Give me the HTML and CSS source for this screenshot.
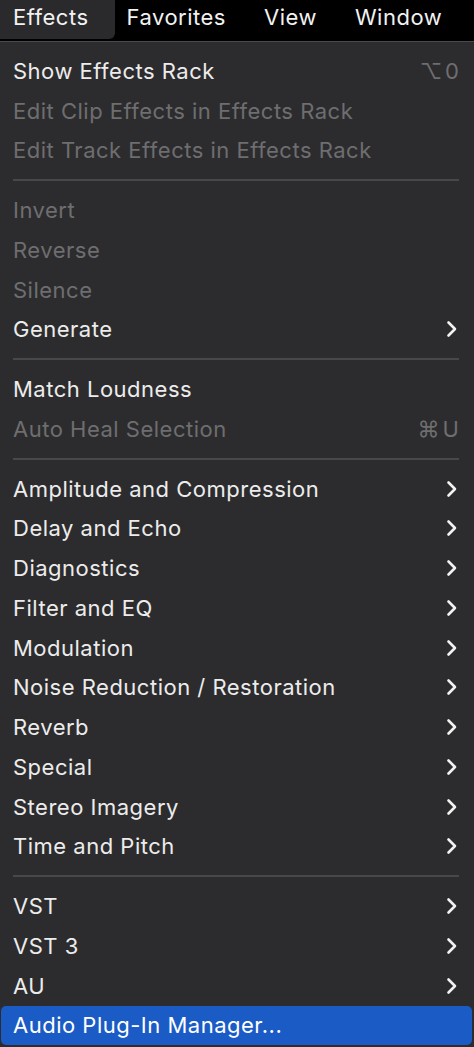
FILE: index.html
```html
<!DOCTYPE html>
<html lang="en">
<head>
<meta charset="utf-8">
<title>Effects menu</title>
<link rel="stylesheet" href="styles.css">
</head>
<body>
<div class="menubar">
  <div class="mb-item active">Effects</div>
  <div class="mb-item">Favorites</div>
  <div class="mb-item">View</div>
  <div class="mb-item">Window</div>
</div>
<div class="menu">
  <div class="row"><span class="label">Show Effects Rack</span><span class="key">⌥0</span></div>
  <div class="row dis"><span class="label">Edit Clip Effects in Effects Rack</span></div>
  <div class="row dis"><span class="label">Edit Track Effects in Effects Rack</span></div>
  <div class="sep"></div>
  <div class="row dis"><span class="label">Invert</span></div>
  <div class="row dis"><span class="label">Reverse</span></div>
  <div class="row dis"><span class="label">Silence</span></div>
  <div class="row"><span class="label">Generate</span><svg class="chev" viewBox="0 0 13 18"><path d="M3.5 2.5L10 9L3.5 15.5"/></svg></div>
  <div class="sep"></div>
  <div class="row"><span class="label">Match Loudness</span></div>
  <div class="row dis"><span class="label">Auto Heal Selection</span><span class="key">⌘U</span></div>
  <div class="sep"></div>
  <div class="row"><span class="label">Amplitude and Compression</span><svg class="chev" viewBox="0 0 13 18"><path d="M3.5 2.5L10 9L3.5 15.5"/></svg></div>
  <div class="row"><span class="label">Delay and Echo</span><svg class="chev" viewBox="0 0 13 18"><path d="M3.5 2.5L10 9L3.5 15.5"/></svg></div>
  <div class="row"><span class="label">Diagnostics</span><svg class="chev" viewBox="0 0 13 18"><path d="M3.5 2.5L10 9L3.5 15.5"/></svg></div>
  <div class="row"><span class="label">Filter and EQ</span><svg class="chev" viewBox="0 0 13 18"><path d="M3.5 2.5L10 9L3.5 15.5"/></svg></div>
  <div class="row"><span class="label">Modulation</span><svg class="chev" viewBox="0 0 13 18"><path d="M3.5 2.5L10 9L3.5 15.5"/></svg></div>
  <div class="row"><span class="label">Noise Reduction / Restoration</span><svg class="chev" viewBox="0 0 13 18"><path d="M3.5 2.5L10 9L3.5 15.5"/></svg></div>
  <div class="row"><span class="label">Reverb</span><svg class="chev" viewBox="0 0 13 18"><path d="M3.5 2.5L10 9L3.5 15.5"/></svg></div>
  <div class="row"><span class="label">Special</span><svg class="chev" viewBox="0 0 13 18"><path d="M3.5 2.5L10 9L3.5 15.5"/></svg></div>
  <div class="row"><span class="label">Stereo Imagery</span><svg class="chev" viewBox="0 0 13 18"><path d="M3.5 2.5L10 9L3.5 15.5"/></svg></div>
  <div class="row"><span class="label">Time and Pitch</span><svg class="chev" viewBox="0 0 13 18"><path d="M3.5 2.5L10 9L3.5 15.5"/></svg></div>
  <div class="sep"></div>
  <div class="row"><span class="label">VST</span><svg class="chev" viewBox="0 0 13 18"><path d="M3.5 2.5L10 9L3.5 15.5"/></svg></div>
  <div class="row"><span class="label">VST 3</span><svg class="chev" viewBox="0 0 13 18"><path d="M3.5 2.5L10 9L3.5 15.5"/></svg></div>
  <div class="row"><span class="label">AU</span><svg class="chev" viewBox="0 0 13 18"><path d="M3.5 2.5L10 9L3.5 15.5"/></svg></div>
  <div class="row hl"><span class="label">Audio Plug-In Manager...</span></div>
</div>
</body>
</html>
```

FILE: styles.css
```css
html, body {
  margin: 0;
  padding: 0;
  background: #000;
  height: 1047px;
  overflow: hidden;
}
body {
  font-family: Inter, "Liberation Sans", Arial, sans-serif;
  -webkit-font-smoothing: antialiased;
}
.menubar {
  display: flex;
  height: 39px;
  background: #000;
  color: #f2f2f2;
  font-size: 22px;
  letter-spacing: 0.5px;
}
.mb-item {
  display: flex;
  align-items: center;
  padding: 0 19px 5px;
}
.mb-item.active {
  background: #2a2a2c;
  padding-left: 13px;
  padding-right: 26px;
  border-bottom-right-radius: 6px;
}
.active + .mb-item {
  padding-left: 12px;
}
.menu {
  margin-top: 2px;
  background: #2c2c2e;
  border-top: 1px solid #4a4a4c;
  padding-top: 9px;
  height: 1006px;
  box-sizing: border-box;
  color: #ececec;
  font-size: 22px;
  letter-spacing: 0.5px;
}
.row {
  display: flex;
  align-items: center;
  height: 39.75px;
  padding: 0 15px 0 13px;
}
.row .label {
  flex: 1;
  white-space: nowrap;
}
.row.dis {
  color: #6e6e70;
}
.key {
  color: #6e6e70;
  letter-spacing: 3px;
  margin-right: -3px;
}
.chev {
  width: 13px;
  height: 18px;
  fill: none;
  stroke: #f2f2f2;
  stroke-width: 2.6;
  stroke-linecap: round;
  stroke-linejoin: round;
  margin-right: 1px;
}
.sep {
  height: 20px;
  display: flex;
  align-items: center;
  padding: 0 15px 0 13px;
}
.sep::before {
  content: "";
  flex: 1;
  height: 2px;
  background: #48484a;
}
.row.hl {
  background: #1a5bc6;
  color: #fff;
  border-radius: 5px;
  margin: 0 2px 0 1px;
  padding-left: 12px;
}
```
